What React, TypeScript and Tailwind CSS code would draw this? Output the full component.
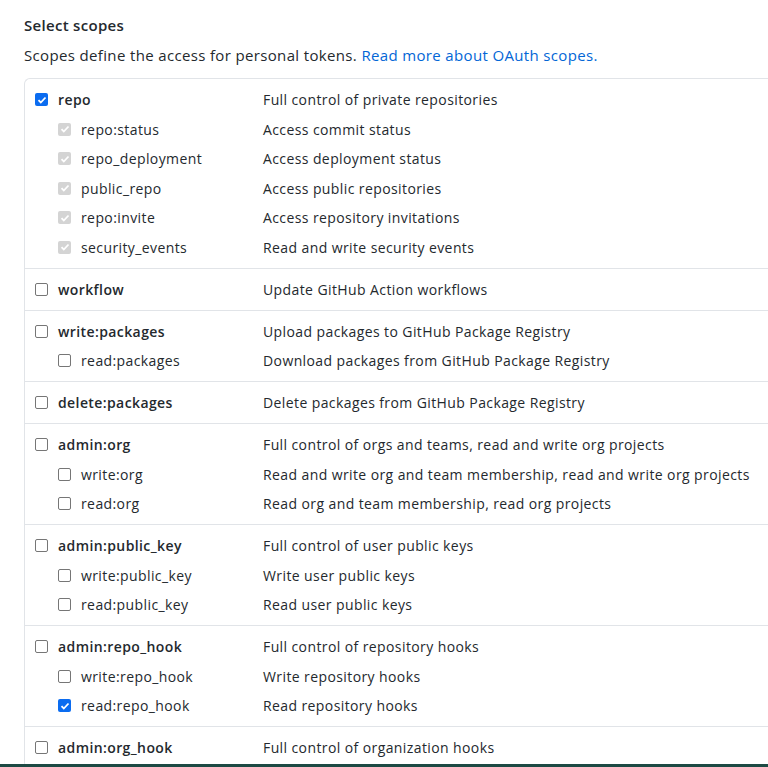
import React from "react";

type Row = { name: string; desc: string; sub?: boolean; checked?: boolean; disabled?: boolean };
const groups: Row[][] = [
  [
    { name: "repo", desc: "Full control of private repositories", checked: true },
    { name: "repo:status", desc: "Access commit status", sub: true, checked: true, disabled: true },
    { name: "repo_deployment", desc: "Access deployment status", sub: true, checked: true, disabled: true },
    { name: "public_repo", desc: "Access public repositories", sub: true, checked: true, disabled: true },
    { name: "repo:invite", desc: "Access repository invitations", sub: true, checked: true, disabled: true },
    { name: "security_events", desc: "Read and write security events", sub: true, checked: true, disabled: true },
  ],
  [{ name: "workflow", desc: "Update GitHub Action workflows" }],
  [
    { name: "write:packages", desc: "Upload packages to GitHub Package Registry" },
    { name: "read:packages", desc: "Download packages from GitHub Package Registry", sub: true },
  ],
  [{ name: "delete:packages", desc: "Delete packages from GitHub Package Registry" }],
  [
    { name: "admin:org", desc: "Full control of orgs and teams, read and write org projects" },
    { name: "write:org", desc: "Read and write org and team membership, read and write org projects", sub: true },
    { name: "read:org", desc: "Read org and team membership, read org projects", sub: true },
  ],
  [
    { name: "admin:public_key", desc: "Full control of user public keys" },
    { name: "write:public_key", desc: "Write user public keys", sub: true },
    { name: "read:public_key", desc: "Read user public keys", sub: true },
  ],
  [
    { name: "admin:repo_hook", desc: "Full control of repository hooks" },
    { name: "write:repo_hook", desc: "Write repository hooks", sub: true },
    { name: "read:repo_hook", desc: "Read repository hooks", sub: true, checked: true },
  ],
  [{ name: "admin:org_hook", desc: "Full control of organization hooks" }],
];

function Box({ checked, disabled }: { checked?: boolean; disabled?: boolean }) {
  if (checked) {
    return (
      <span className={`w-[13px] h-[13px] rounded-[2px] flex items-center justify-center ${disabled ? "bg-[#d4d4d4]" : "bg-[#0b6cf0]"}`}>
        <svg width="10" height="10" viewBox="0 0 10 10"><path d="M1.5 5.2l2.3 2.3 4.7-5" stroke="white" strokeWidth="1.8" fill="none" /></svg>
      </span>
    );
  }
  return <span className="w-[13px] h-[13px] rounded-[2px] border border-[#767676] bg-white" />;
}

export default function App() {
  return (
    <div className="w-[768px] h-[767px] overflow-hidden bg-white text-[#24292e] relative" style={{ fontFamily: '"Open Sans", "Noto Sans", sans-serif' }}>
      <div className="pl-[24px] pt-[14px]">
        <div className="text-[15px] font-semibold leading-[22px] tracking-[0.3px]">Select scopes</div>
        <div className="text-[15px] leading-[22px] mt-[8px] tracking-[0.35px] whitespace-nowrap">
          Scopes define the access for personal tokens. <span className="text-[#0366d6]">Read more about OAuth scopes.</span>
        </div>
        <div className="mt-[12px] border border-[#e1e4e8] rounded-l-[6px] border-r-0 w-[760px]">
          {groups.map((g, gi) => (
            <div key={gi} className={`py-[5.75px] ${gi ? "border-t border-[#e1e4e8]" : ""}`}>
              {g.map((r) => (
                <div key={r.name} className="h-[29.5px] flex items-center text-[14px] tracking-[0.4px]">
                  <div className={`flex items-center gap-[10px] w-[238px] ${r.sub ? "pl-[33px]" : "pl-[10px]"}`}>
                    <Box checked={r.checked} disabled={r.disabled} />
                    <span className={r.sub ? "" : "font-semibold"}>{r.name}</span>
                  </div>
                  <span className="whitespace-nowrap">{r.desc}</span>
                </div>
              ))}
            </div>
          ))}
        </div>
      </div>
      <div className="absolute bottom-0 left-0 w-full h-[3px] bg-[#1d4a44]" />
    </div>
  );
}
